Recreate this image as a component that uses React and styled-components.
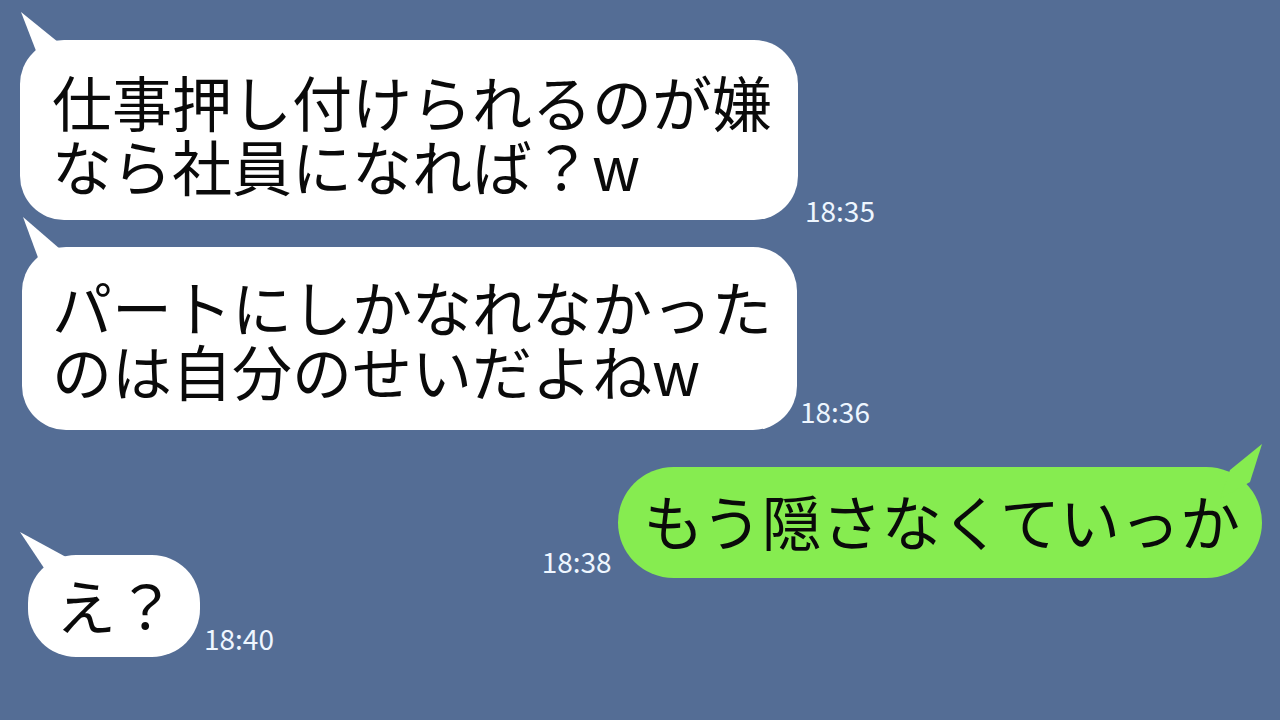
import React from "react";
import styled, { createGlobalStyle } from "styled-components";

const Global = createGlobalStyle`
  html, body { margin: 0; padding: 0; }
  body { background: #546d95; }
`;

const Page = styled.div`
  width: 1280px;
  height: 720px;
  overflow: hidden;
  box-sizing: border-box;
  padding-top: 40px;
  background: #546d95;
  display: flex;
  flex-direction: column;
  font-family: "Noto Sans CJK JP", "Noto Sans", sans-serif;
`;

const Row = styled.div`
  display: flex;
  align-items: flex-end;
  justify-content: ${(p) => (p.$mine ? "flex-end" : "flex-start")};
  margin-top: ${(p) => p.$top || 0}px;
  padding-left: ${(p) => p.$left || 0}px;
  padding-right: ${(p) => p.$right || 0}px;
  gap: ${(p) => p.$gap || 5}px;
`;

const Bubble = styled.div`
  position: relative;
  background: ${(p) => (p.$mine ? "#86ec50" : "#ffffff")};
  color: #0a0a0a;
  font-size: 60px;
  line-height: 64px;
  white-space: nowrap;
  border-radius: ${(p) => p.$radius || 44}px;
  padding: ${(p) => p.$pad};

  &::before {
    content: "";
    position: absolute;
    top: -40px;
    width: 80px;
    height: 80px;
    background: inherit;
    ${(p) => (p.$mine ? "right: -20px;" : "left: -20px;")}
    clip-path: ${(p) => p.$tail};
  }
`;

const Time = styled.span`
  color: #eef6ff;
  font-size: 28px;
  line-height: 1;
  margin-bottom: ${(p) => p.$bottom || 0}px;
`;

/* tail polygons, in the pseudo box (bubble coords + 20,40) */
const leftTail = (tx, ty) =>
  `polygon(${tx + 20}px ${ty + 40}px, 58px 42px, 62px 72px, 38px 56px)`;
const rightTail = (tx, ty) =>
  `polygon(${60 + tx}px ${ty + 40}px, 48px 55px, 18px 72px, 28px 43px)`;

export default function App() {
  return (
    <>
      <Global />
      <Page>
        <Row $left={20} $gap={7}>
          <Bubble $pad="29px 26px 23px 32px" $tail={leftTail(1, -28)}>
            仕事押し付けられるのが嫌
            <br />
            なら社員になれば？w
          </Bubble>
          <Time $bottom={-4}>18:35</Time>
        </Row>
        <Row $top={27} $left={22} $gap={3}>
          <Bubble $pad="27px 25px 28px 30px" $tail={leftTail(1, -30)}>
            パートにしかなれなかった
            <br />
            のは自分のせいだよねw
          </Bubble>
          <Time $bottom={5}>18:36</Time>
        </Row>
        <Row $top={37} $mine $right={18} $gap={6}>
          <Time $bottom={3}>18:38</Time>
          <Bubble
            $mine
            $radius={56}
            $pad="21px 22px 26px 26px"
            $tail={rightTail(0, -23)}
          >
            もう隠さなくていっか
          </Bubble>
        </Row>
        <Row $top={-23} $left={28} $gap={4}>
          <Bubble
            $radius={48}
            $pad="17px 24px 21px 28px"
            $tail={leftTail(-8, -23)}
          >
            え？
          </Bubble>
          <Time $bottom={5}>18:40</Time>
        </Row>
      </Page>
    </>
  );
}
